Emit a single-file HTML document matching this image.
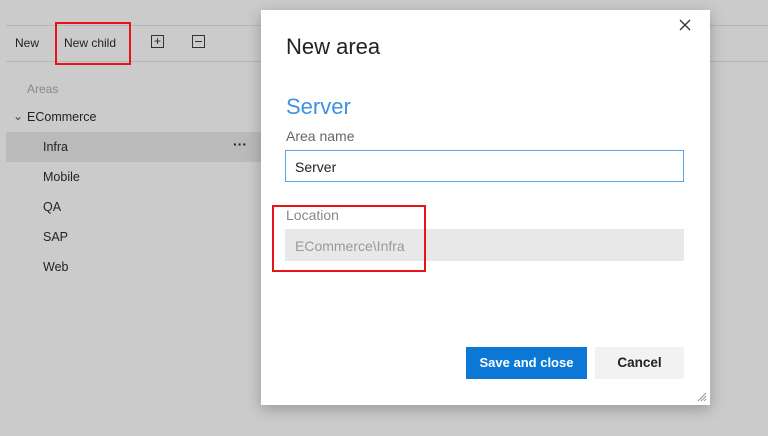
<!DOCTYPE html>
<html><head><style>
body{margin:0;width:768px;height:436px;background:#cbcbcb;font-family:"Liberation Sans",sans-serif;position:relative;overflow:hidden;color:#222}
.a{position:absolute;white-space:nowrap}
</style></head><body>
<div class="a" style="left:6px;top:25px;width:762px;height:1px;background:#b5b5b5"></div>
<div class="a" style="left:6px;top:61px;width:762px;height:1px;background:#b5b5b5"></div>
<div class="a" style="left:15px;top:36px;font-size:12px">New</div>
<div class="a" style="left:64px;top:36px;font-size:12px">New child</div>
<div class="a" style="left:55px;top:22px;width:72px;height:39px;border:2px solid #e8141a"></div>
<div class="a" style="left:151px;top:35px;width:11px;height:11px;border:1px solid #333;font-size:12px;line-height:11px;text-align:center">+</div>
<div class="a" style="left:192px;top:35px;width:11px;height:11px;border:1px solid #333"><div style="position:absolute;left:2px;top:5px;width:7px;height:1px;background:#333"></div></div>
<div class="a" style="left:27px;top:82px;font-size:12px;color:#888">Areas</div>
<div class="a" style="left:13px;top:109px;font-size:12px;color:#444">⌄</div>
<div class="a" style="left:27px;top:110px;font-size:12.5px">ECommerce</div>
<div class="a" style="left:6px;top:132px;width:262px;height:30px;background:#bababa"></div>
<div class="a" style="left:43px;top:140px;font-size:12.5px">Infra</div>
<div class="a" style="left:233px;top:136px;font-size:14px;font-weight:bold">···</div>
<div class="a" style="left:43px;top:170px;font-size:12.5px">Mobile</div>
<div class="a" style="left:43px;top:200px;font-size:12.5px">QA</div>
<div class="a" style="left:43px;top:230px;font-size:12.5px">SAP</div>
<div class="a" style="left:43px;top:260px;font-size:12.5px">Web</div>
<div class="a" style="left:261px;top:10px;width:449px;height:395px;background:#fff;box-shadow:0 4px 14px rgba(0,0,0,.25)"></div>
<svg class="a" style="left:679px;top:19px" width="12" height="12"><path d="M1 1L11 11M11 1L1 11" stroke="#333" stroke-width="1.3"/></svg>
<svg class="a" style="left:697px;top:392px" width="10" height="10"><path d="M9 1L1 9M9 4L4 9M9 7L7 9" stroke="#999" stroke-width="1"/></svg>
<div class="a" style="left:286px;top:34px;font-size:22px;color:#222">New area</div>
<div class="a" style="left:286px;top:94px;font-size:22px;color:#3e92e0">Server</div>
<div class="a" style="left:286px;top:128px;font-size:14px;color:#666">Area name</div>
<div class="a" style="left:285px;top:150px;width:397px;height:30px;border:1px solid #5aa3e6"></div>
<div class="a" style="left:295px;top:159px;font-size:14px">Server</div>
<div class="a" style="left:286px;top:207px;font-size:14px;color:#888">Location</div>
<div class="a" style="left:285px;top:229px;width:399px;height:32px;background:#e8e8e8"></div>
<div class="a" style="left:295px;top:238px;font-size:14px;color:#999">ECommerce\Infra</div>
<div class="a" style="left:272px;top:205px;width:150px;height:63px;border:2px solid #e8141a"></div>
<div class="a" style="left:466px;top:347px;width:121px;height:32px;background:#0a78d4;color:#fff;font-size:13px;font-weight:bold;line-height:32px;text-align:center">Save and close</div>
<div class="a" style="left:595px;top:347px;width:89px;height:32px;background:#f2f2f2;font-size:13.5px;font-weight:bold;line-height:32px;text-align:center;color:#222">Cancel</div>
</body></html>
